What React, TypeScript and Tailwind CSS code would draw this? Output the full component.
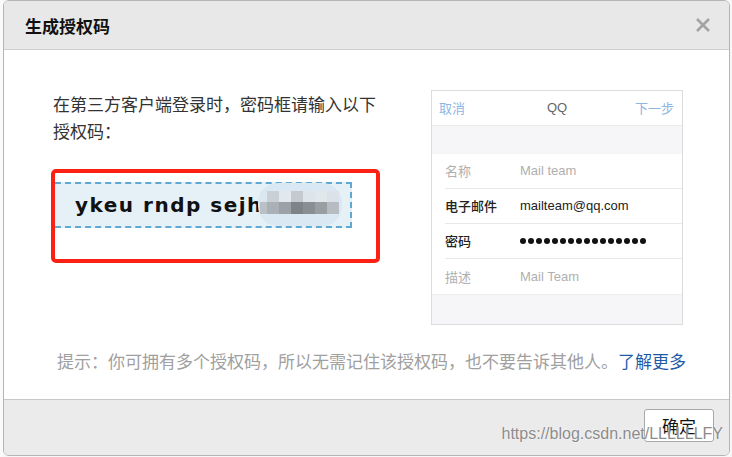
import React from "react";

const CJK = '"Noto Sans CJK SC", "Noto Sans", sans-serif';

function Pixels() {
  const top = ["#dbe7ee", "#c9d1d7", "#e1e9ee", "#c3c9cf", "#dee5ea", "#e1e8ec", "#dbe3e9"];
  const bot = ["#b9c1c7", "#a9b0b6", "#9ba1a6", "#7e8388", "#898e93", "#999ea3", "#b6bcc1"];
  const widths = [7, 12, 12, 12, 12, 12, 12];
  return (
    <div className="absolute left-[203px] top-[-1px] w-[84px] h-[43px] rounded-[20px] bg-[#d9e8f2]">
      <div className="absolute left-[2px] top-[8px] flex flex-col">
        <div className="flex">
          {top.map((c, i) => (
            <div key={i} className="h-[11px]" style={{ width: widths[i], background: c }} />
          ))}
        </div>
        <div className="flex">
          {bot.map((c, i) => (
            <div key={i} className="h-[12px]" style={{ width: widths[i], background: c }} />
          ))}
        </div>
      </div>
    </div>
  );
}

function Phone() {
  const rows = [
    { l: "名称", v: "Mail team", dim: true },
    { l: "电子邮件", v: "mailteam@qq.com", dim: false },
    { l: "密码", v: "dots", dim: false },
    { l: "描述", v: "Mail Team", dim: true },
  ];
  return (
    <div
      className="w-[252px] h-[235px] border border-[#dcdcdc] flex flex-col bg-white"
      style={{ fontFamily: '"Liberation Sans", "Noto Sans CJK SC", sans-serif' }}
    >
      <div className="h-[35px] grid grid-cols-3 items-center px-[7px] text-[13px] border-b border-[#ececec]">
        <span className="text-[#8db6e4]" style={{ fontFamily: CJK }}>取消</span>
        <span className="text-center text-[#666]">QQ</span>
        <span className="text-right text-[#8db6e4] pr-[1px]" style={{ fontFamily: CJK }}>下一步</span>
      </div>
      <div className="h-[28px] bg-[#f6f6f8]" />
      <div className="pl-[13px] flex flex-col">
        {rows.map((r, i) => (
          <div
            key={i}
            className={"h-[35px] flex items-center text-[13px] " + (i < 3 ? "border-b border-[#e8e8e8]" : "")}
          >
            <span
              className={"w-[75px] " + (r.dim ? "text-[#b0b0b0]" : "text-[#222] font-medium")}
              style={{ fontFamily: CJK }}
            >
              {r.l}
            </span>
            {r.v === "dots" ? (
              <div className="flex gap-[2px]">
                {Array.from({ length: 16 }).map((_, k) => (
                  <div key={k} className="w-[6px] h-[6px] rounded-full bg-[#111]" />
                ))}
              </div>
            ) : (
              <span className={r.dim ? "text-[#b0b0b0]" : "text-[#222]"}>{r.v}</span>
            )}
          </div>
        ))}
      </div>
      <div className="flex-1 bg-[#f6f6f8] border-t border-[#ececec]" />
    </div>
  );
}

export default function App() {
  return (
    <div className="w-[732px] h-[457px] bg-[#f7f7f7] overflow-hidden relative" style={{ fontFamily: CJK }}>
      <div className="absolute left-0 top-0 w-[3px] h-[457px] bg-[#fafafa]" />
      <div className="ml-[3px] w-[727px] h-[456px] border border-[#b5b5b5] rounded-[6px] overflow-hidden flex flex-col bg-white">
        <div className="h-[49px] shrink-0 bg-[#e8e8e8] border-b border-[#cfcfcf] flex items-center justify-between pl-[21px] pr-[18px]">
          <span className="text-[17px] font-bold text-[#111] leading-none">生成授权码</span>
          <svg width="16" height="16" viewBox="0 0 16 16">
            <path d="M2 2 L14 14 M14 2 L2 14" stroke="#a3a3a3" strokeWidth="2.6" strokeLinecap="butt" />
          </svg>
        </div>
        <div className="flex-1 pl-[47px] pt-[40px] flex flex-col">
          <div className="flex">
            <div className="w-[380px] flex flex-col">
              <p className="ml-[2px] text-[17px] leading-[27px] text-[#333] w-[330px]">
                在第三方客户端登录时，密码框请输入以下授权码：
              </p>
              <div className="mt-[25px] w-[329px] h-[94px] border-[4px] border-[#fc2115] rounded-[5px] pt-[9px]">
                <div className="relative w-[297px] h-[46px] bg-[#e5f0f7] border-2 border-l-0 border-dashed border-[#5ea8d3] flex items-center pl-[20px]">
                  <span
                    className="text-[20px] font-bold text-[#111] tracking-[1.5px]"
                    style={{ fontFamily: '"DejaVu Sans", Verdana, sans-serif' }}
                  >
                    ykeu rndp sejh
                  </span>
                  <Pixels />
                </div>
              </div>
            </div>
            <Phone />
          </div>
          <p className="mt-[22px] ml-[6px] text-[17px] leading-[27px] text-[#a0a0a0] whitespace-nowrap">
            提示：你可拥有多个授权码，所以无需记住该授权码，也不要告诉其他人。
            <span className="text-[#1f5ba6]">了解更多</span>
          </p>
        </div>
        <div className="h-[56px] shrink-0 bg-[#ebebeb] border-t border-[#c8c8c8] flex justify-end items-start pt-[9px] pr-[15px] relative">
          <button className="w-[70px] h-[33px] bg-white border border-[#a8a8a8] rounded-[3px] text-[17px] text-[#111] leading-none">
            确定
          </button>
          <span
            className="absolute right-[6px] top-[26px] text-[16px] leading-none text-[#8c8c8c] whitespace-nowrap"
            style={{ fontFamily: '"Liberation Sans", Arial, sans-serif', textShadow: "0 0 2px #fff" }}
          >
            https://blog.csdn.net/LLLLLLFY
          </span>
        </div>
      </div>
    </div>
  );
}
